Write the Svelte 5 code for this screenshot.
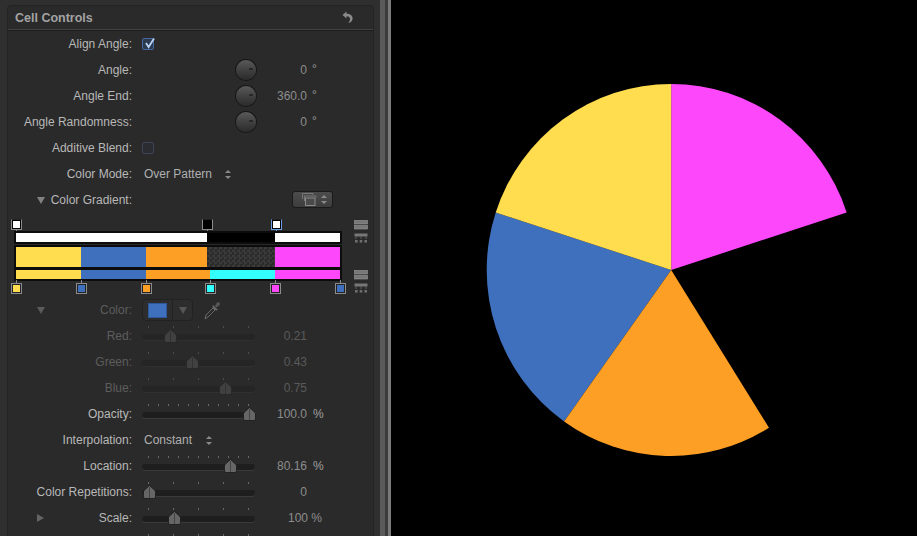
<script>
  const wedges = [
    { color: '#fd47fb', from: 0, to: 72 },
    { color: '#3f70bd', from: 215.5, to: 288 },
    { color: '#fe9f25', from: 148, to: 215.5 },
    { color: '#ffdd4f', from: 288, to: 360 },
  ]
  const cx = 671.2
  const cy = 270
  const rx = 184.5
  const ry = 186
  const point = deg => {
    const a = (deg * Math.PI) / 180
    return `${cx + rx * Math.sin(a)} ${cy - ry * Math.cos(a)}`
  }
  const wedgePath = w => `M${cx} ${cy} L${point(w.from)} A${rx} ${ry} 0 0 1 ${point(w.to)} Z`

  const ticks5 = [0, 1, 2, 3, 4]
  const ticks11 = Array.from({ length: 11 }, (_, i) => i)
  const stopsTop = [
    { x: 16, c: '#fff' },
    { x: 207, c: '#000' },
    { x: 276, c: '#fff', on: true },
  ]
  const stopsBottom = [
    { x: 16, c: '#ffdd4f' },
    { x: 81, c: '#3f70bd' },
    { x: 146, c: '#fe9f25' },
    { x: 210, c: '#33ffff' },
    { x: 275, c: '#fd47fb' },
    { x: 340, c: '#3f70bd' },
  ]
</script>

{#snippet label(text, dim = false)}
  <span class="label" class:dim>{text}</span>
{/snippet}

{#snippet knob()}
  <span class="knob"><i></i></span>
{/snippet}

{#snippet slider(pos, ticks, dim = false)}
  <span class="slider" class:dim>
    <span class="ticks">
      {#each ticks as t (t)}<b></b>{/each}
    </span>
    <span class="track"></span>
    <svg class="thumb" style="left: {pos}px" width="13" height="14" viewBox="0 0 13 14">
      <path d="M6.5 .5 L12 5.5 Q12.5 6 12.5 7 V12 Q12.5 13.5 11 13.5 H2 Q.5 13.5 .5 12 V7 Q.5 6 1 5.5 Z" fill={dim ? '#404040' : '#666'} stroke={dim ? '#262626' : '#191919'} stroke-width=".8" />
      <path d="M6.5 2 V13" stroke={dim ? '#2e2e2e' : '#3a3a3a'} stroke-width=".8" />
    </svg>
  </span>
{/snippet}

{#snippet stackIcon()}
  <svg width="14" height="10" viewBox="0 0 14 10">
    <rect x=".5" y=".5" width="13" height="3.5" fill="#777" stroke="#999" stroke-width=".6" />
    <rect x=".5" y="5.5" width="13" height="3.5" fill="#777" stroke="#999" stroke-width=".6" />
  </svg>
{/snippet}

{#snippet distIcon()}
  <svg width="14" height="10" viewBox="0 0 14 10">
    <path d="M.5 .5 H13.5 V3.5 H.5 Z" fill="#777" />
    <path d="M2 3.5 V6 M7 3.5 V6 M12 3.5 V6" stroke="#777" stroke-width=".7" />
    <rect x="1" y="7" width="2.6" height="2.6" fill="#6e6e6e" />
    <rect x="5.7" y="7" width="2.6" height="2.6" fill="#6e6e6e" />
    <rect x="10.4" y="7" width="2.6" height="2.6" fill="#6e6e6e" />
  </svg>
{/snippet}

<div class="screen">
  <aside class="sidebar">
    <section class="panel">
      <header>
        <h2>Cell Controls</h2>
        <svg class="reset" width="11" height="13" viewBox="0 0 11 13">
          <path d="M4.5 .5 L.5 4 L4.5 7.5 V5.2 C7 5.2 8 6.5 8 8.2 C8 9.8 7.2 10.8 6 12 C9 11.6 10.6 9.6 10.6 7.4 C10.6 4.6 8.4 2.8 4.5 2.8 Z" fill="#8a8a8a" />
        </svg>
      </header>

      <div class="rows">
        <div class="row">
          {@render label('Align Angle:')}
          <span class="check on">
            <svg width="13" height="13" viewBox="0 0 13 13"><path d="M3 6 L5.6 10 L11 1.5" fill="none" stroke="#b9d3f5" stroke-width="1.8" /></svg>
          </span>
        </div>
        <div class="row">
          {@render label('Angle:')}
          <span class="knob-cell">{@render knob()}</span>
          <span class="value">0</span><span class="unit">°</span>
        </div>
        <div class="row">
          {@render label('Angle End:')}
          <span class="knob-cell">{@render knob()}</span>
          <span class="value">360.0</span><span class="unit">°</span>
        </div>
        <div class="row">
          {@render label('Angle Randomness:')}
          <span class="knob-cell">{@render knob()}</span>
          <span class="value">0</span><span class="unit">°</span>
        </div>
        <div class="row">
          {@render label('Additive Blend:')}
          <span class="check"></span>
        </div>
        <div class="row">
          {@render label('Color Mode:')}
          <span class="select wide">Over Pattern</span>
          <span class="updown"></span>
        </div>
        <div class="row">
          <span class="tri down"></span>
          {@render label('Color Gradient:')}
          <button class="preset" aria-label="Gradient presets">
            <svg width="15" height="13" viewBox="0 0 15 13">
              <path d="M.5 6 V.5 H11 V2 M2.5 8 V3 H14 V4.5" fill="none" stroke="#777" />
              <rect x="3.5" y="5" width="9.5" height="7.5" fill="#4a4a4a" stroke="#8a8a8a" />
            </svg>
            <span class="updown"></span>
          </button>
        </div>
      </div>

      <div class="gradient">
        <div class="stops top">
          {#each stopsTop as s (s.x)}
            <span class="stop" class:on={s.on} style="left: {s.x}px"><i style="background: {s.c}"></i></span>
          {/each}
        </div>
        <div class="bar alpha"><i style="width: 191px; background: #fff"></i><i style="width: 68px; background: #000"></i><i style="flex: 1; background: #fff"></i></div>
        <div class="bar preview">
          <i style="width: 65px; background: #ffdd4f"></i>
          <i style="width: 65px; background: #3f70bd"></i>
          <i style="width: 61px; background: #fe9f25"></i>
          <i class="checker" style="width: 68px"></i>
          <i style="flex: 1; background: #fd47fb"></i>
        </div>
        <div class="bar rgb">
          <i style="width: 65px; background: #ffdd4f"></i>
          <i style="width: 65px; background: #3f70bd"></i>
          <i style="width: 64px; background: #fe9f25"></i>
          <i style="width: 65px; background: #33ffff"></i>
          <i style="flex: 1; background: #fd47fb"></i>
        </div>
        <div class="stops bottom">
          {#each stopsBottom as s (s.x)}
            <span class="stop" style="left: {s.x}px"><i style="background: {s.c}"></i></span>
          {/each}
        </div>
        <div class="tools t1">{@render stackIcon()}{@render distIcon()}</div>
        <div class="tools t2">{@render stackIcon()}{@render distIcon()}</div>
      </div>

      <div class="rows">
        <div class="row">
          <span class="tri down dim"></span>
          {@render label('Color:', true)}
          <span class="well"><i></i><span class="well-arrow"><em></em></span></span>
          <svg class="dropper" width="17" height="19" viewBox="0 0 17 19">
            <path d="M1 18 L2 14 L9 7 L11 9 L4 16 Z" fill="none" stroke="#6a6a6a" />
            <path d="M9 4 L14 9 L12 9.6 L8.4 6 Z" fill="#6d6d6d" />
            <path d="M11 5 L13 1.6 C14 .6 16 1.4 16 3 C16 4 15 5 12.5 6.5 Z" fill="#555" />
          </svg>
        </div>
        <div class="row">
          {@render label('Red:', true)}
          {@render slider(22, ticks5, true)}
          <span class="value num dim">0.21</span>
        </div>
        <div class="row">
          {@render label('Green:', true)}
          {@render slider(44, ticks5, true)}
          <span class="value num dim">0.43</span>
        </div>
        <div class="row">
          {@render label('Blue:', true)}
          {@render slider(77, ticks5, true)}
          <span class="value num dim">0.75</span>
        </div>
        <div class="row">
          {@render label('Opacity:')}
          {@render slider(101, ticks11)}
          <span class="value num">100.0</span><span class="pct">%</span>
        </div>
        <div class="row">
          {@render label('Interpolation:')}
          <span class="select narrow">Constant</span>
          <span class="updown"></span>
        </div>
        <div class="row">
          {@render label('Location:')}
          {@render slider(82, ticks11)}
          <span class="value num">80.16</span><span class="pct">%</span>
        </div>
        <div class="row">
          {@render label('Color Repetitions:')}
          {@render slider(1, ticks5)}
          <span class="value num">0</span>
        </div>
        <div class="row">
          <span class="tri right"></span>
          {@render label('Scale:')}
          {@render slider(26, ticks5)}
          <span class="value scale">100 %</span>
        </div>
        <div class="row">
          {@render label('')}
          {@render slider(26, ticks5)}
        </div>
      </div>
    </section>
  </aside>

  <div class="divider"></div>

  <main class="canvas">
    <svg width="526" height="536" viewBox="391 0 526 536">
      {#each wedges as w (w.color)}
        <path d={wedgePath(w)} fill={w.color} />
      {/each}
    </svg>
  </main>
</div>

<style>
  :global(body) {
    margin: 0;
    background: #000;
  }

  .screen {
    display: flex;
    width: 917px;
    height: 536px;
    overflow: hidden;
    font-family: 'Liberation Sans', Arial, sans-serif;
    font-size: 12px;
    color: #b4b4b4;
  }

  .sidebar {
    flex: none;
    width: 380px;
    padding: 5px 6px 0 7px;
    box-sizing: border-box;
    background: #2f2f2f;
  }

  .divider {
    flex: none;
    width: 11px;
    background: linear-gradient(90deg, #5a5a5a 0, #5a5a5a 5px, #3c3c3c 5px, #3c3c3c 8px, #7a7a7a 8px);
  }

  .canvas {
    flex: 1;
    background: #000;
  }

  .canvas svg {
    display: block;
  }

  .panel {
    height: 560px;
    background: #2a2a2a;
    border: 1px solid #232323;
    border-radius: 4px 4px 0 0;
  }

  header {
    display: flex;
    align-items: center;
    justify-content: space-between;
    height: 23px;
    margin-bottom: 1px;
    padding: 0 20px 0 7px;
    border-bottom: 1px solid #414141;
    box-shadow: 0 1px 0 #1d1d1d;
  }

  h2 {
    margin: 0;
    font-size: 12.5px;
    font-weight: bold;
    color: #a3a3a3;
  }

  .reset {
    display: block;
  }

  .rows {
    display: flex;
    flex-direction: column;
  }

  .row {
    position: relative;
    display: flex;
    align-items: center;
    height: 26px;
  }

  .label {
    flex: none;
    width: 124px;
    margin-right: 10px;
    text-align: right;
    color: #b8b8b8;
  }

  .label.dim {
    color: #5d5d5d;
  }

  .tri {
    position: absolute;
    left: 29px;
    width: 0;
    height: 0;
  }

  .tri.down {
    border-left: 4px solid transparent;
    border-right: 4px solid transparent;
    border-top: 7px solid #818181;
  }

  .tri.down.dim {
    border-top-color: #5b5b5b;
  }

  .tri.right {
    border-top: 4px solid transparent;
    border-bottom: 4px solid transparent;
    border-left: 7px solid #646464;
  }

  .check {
    box-sizing: border-box;
    width: 12px;
    height: 12px;
    border: 1px solid #3a4454;
    border-radius: 2px;
    background: #2a2c32;
  }

  .check.on {
    position: relative;
    border-color: #45699c;
    background: #2c3a50;
  }

  .check.on svg {
    position: absolute;
    left: 0;
    top: -2px;
  }

  .knob-cell {
    display: flex;
    flex: none;
    justify-content: flex-end;
    width: 114px;
  }

  .knob {
    position: relative;
    display: block;
    width: 20px;
    height: 20px;
    border-radius: 50%;
    background: linear-gradient(#5a5a5a, #3c3c3c 60%, #2b2b2b);
    box-shadow: 0 0 0 1px #161616, 0 1px 1px #4a4a4a;
  }

  .knob i {
    position: absolute;
    top: 8px;
    right: 3px;
    width: 4px;
    height: 2px;
    border-radius: 1px;
    background: #252525;
  }

  .value {
    flex: none;
    width: 51px;
    text-align: right;
    color: #8d8d8d;
  }

  .unit {
    margin-left: 5px;
    margin-top: -3px;
    color: #9a9a9a;
  }

  .value.num {
    width: 52px;
  }

  .value.dim {
    color: #5a5a5a;
  }

  .value.scale {
    width: 67px;
  }

  .pct {
    margin-left: 6px;
    color: #a0a0a0;
  }

  .select {
    flex: none;
    padding-left: 2px;
    color: #b0b0b0;
  }

  .select.wide {
    width: 81px;
  }

  .select.narrow {
    width: 62px;
  }

  .updown {
    position: relative;
    display: block;
    width: 6px;
    height: 9px;
  }

  .updown::before,
  .updown::after {
    content: '';
    position: absolute;
    left: 0;
    border-left: 3px solid transparent;
    border-right: 3px solid transparent;
  }

  .updown::before {
    top: 0;
    border-bottom: 3px solid #8a8a8a;
  }

  .updown::after {
    bottom: 0;
    border-top: 3px solid #8a8a8a;
  }

  .preset {
    position: absolute;
    left: 284px;
    top: 4px;
    display: flex;
    align-items: center;
    justify-content: space-between;
    box-sizing: border-box;
    width: 41px;
    height: 17px;
    padding: 0 5px 0 9px;
    border: 1px solid #1a1a1a;
    border-radius: 3px;
    background: linear-gradient(#4c4c4c, #3d3d3d);
  }

  .gradient {
    position: relative;
    height: 84px;
  }

  .stops {
    position: absolute;
    left: 0;
    width: 100%;
  }

  .stops.top {
    top: 6px;
  }

  .stops.bottom {
    top: 70px;
  }

  .stop {
    position: absolute;
    box-sizing: border-box;
    width: 11px;
    height: 11px;
    margin-left: -13px;
    border: 1px solid #8c8c8c;
    background: #222;
  }

  .stop::after {
    content: '';
    position: absolute;
    left: 4px;
    width: 1px;
    height: 3px;
    background: #8c8c8c;
  }

  .stops.top .stop::after {
    top: 9px;
  }

  .stops.bottom .stop::after {
    top: -4px;
  }

  .stops.top .stop {
    border-top-color: #222;
    background: #000;
  }

  .stops.top .stop.on {
    border-color: #222 #6d9de4 #6d9de4;
  }

  .stops.top .stop.on::after {
    background: #6d9de4;
  }

  .stop i {
    display: block;
    width: 7px;
    height: 7px;
    margin: 1px;
  }

  .bar {
    position: absolute;
    left: 6px;
    display: flex;
    box-sizing: border-box;
    width: 328px;
    border: 2px solid #0c0c0c;
  }

  .bar i {
    display: block;
    height: 100%;
  }

  .alpha {
    top: 18px;
    height: 13px;
  }

  .preview {
    top: 32px;
    height: 24px;
  }

  .rgb {
    top: 55px;
    height: 13px;
  }

  .checker {
    background: repeating-conic-gradient(#3a3a3a 0 25%, #2b2b2b 0 50%) 0 0 / 5px 5px;
  }

  .tools {
    position: absolute;
    left: 346px;
    display: flex;
    flex-direction: column;
    gap: 3px;
  }

  .tools svg {
    display: block;
  }

  .t1 {
    top: 7px;
  }

  .t2 {
    top: 57px;
  }

  .well {
    display: flex;
    flex: none;
    align-items: center;
    box-sizing: border-box;
    width: 51px;
    height: 22px;
    border: 1px solid #222;
    border-radius: 4px;
    background: #2d2d2d;
  }

  .well i {
    display: block;
    flex: none;
    width: 19px;
    height: 15px;
    margin: 0 5px 0 5px;
    background: #3f70bd;
    box-shadow: inset 0 0 0 1px #2f5898;
  }

  .well-arrow {
    display: flex;
    flex: 1;
    align-items: center;
    justify-content: center;
    height: 100%;
    border-left: 1px solid #222;
  }

  .well em {
    width: 0;
    height: 0;
    border-left: 4px solid transparent;
    border-right: 4px solid transparent;
    border-top: 7px solid #565656;
  }

  .dropper {
    margin-left: 11px;
  }

  .slider {
    position: relative;
    display: block;
    flex: none;
    width: 113px;
    height: 26px;
  }

  .ticks {
    position: absolute;
    top: 3px;
    left: 6px;
    right: 6px;
    display: flex;
    justify-content: space-between;
  }

  .ticks b {
    display: block;
    width: 1px;
    height: 2px;
    background: #6a6a6a;
  }

  .slider.dim .ticks b {
    background: #4a4a4a;
  }

  .track {
    position: absolute;
    top: 11px;
    left: 0;
    right: 0;
    height: 6px;
    border-radius: 3px;
    background: #1e1e1e;
    box-shadow: 0 1px 0 #3a3a3a;
  }

  .slider.dim .track {
    background: #252525;
    box-shadow: 0 1px 0 #303030;
  }

  .thumb {
    position: absolute;
    top: 6px;
  }
</style>
